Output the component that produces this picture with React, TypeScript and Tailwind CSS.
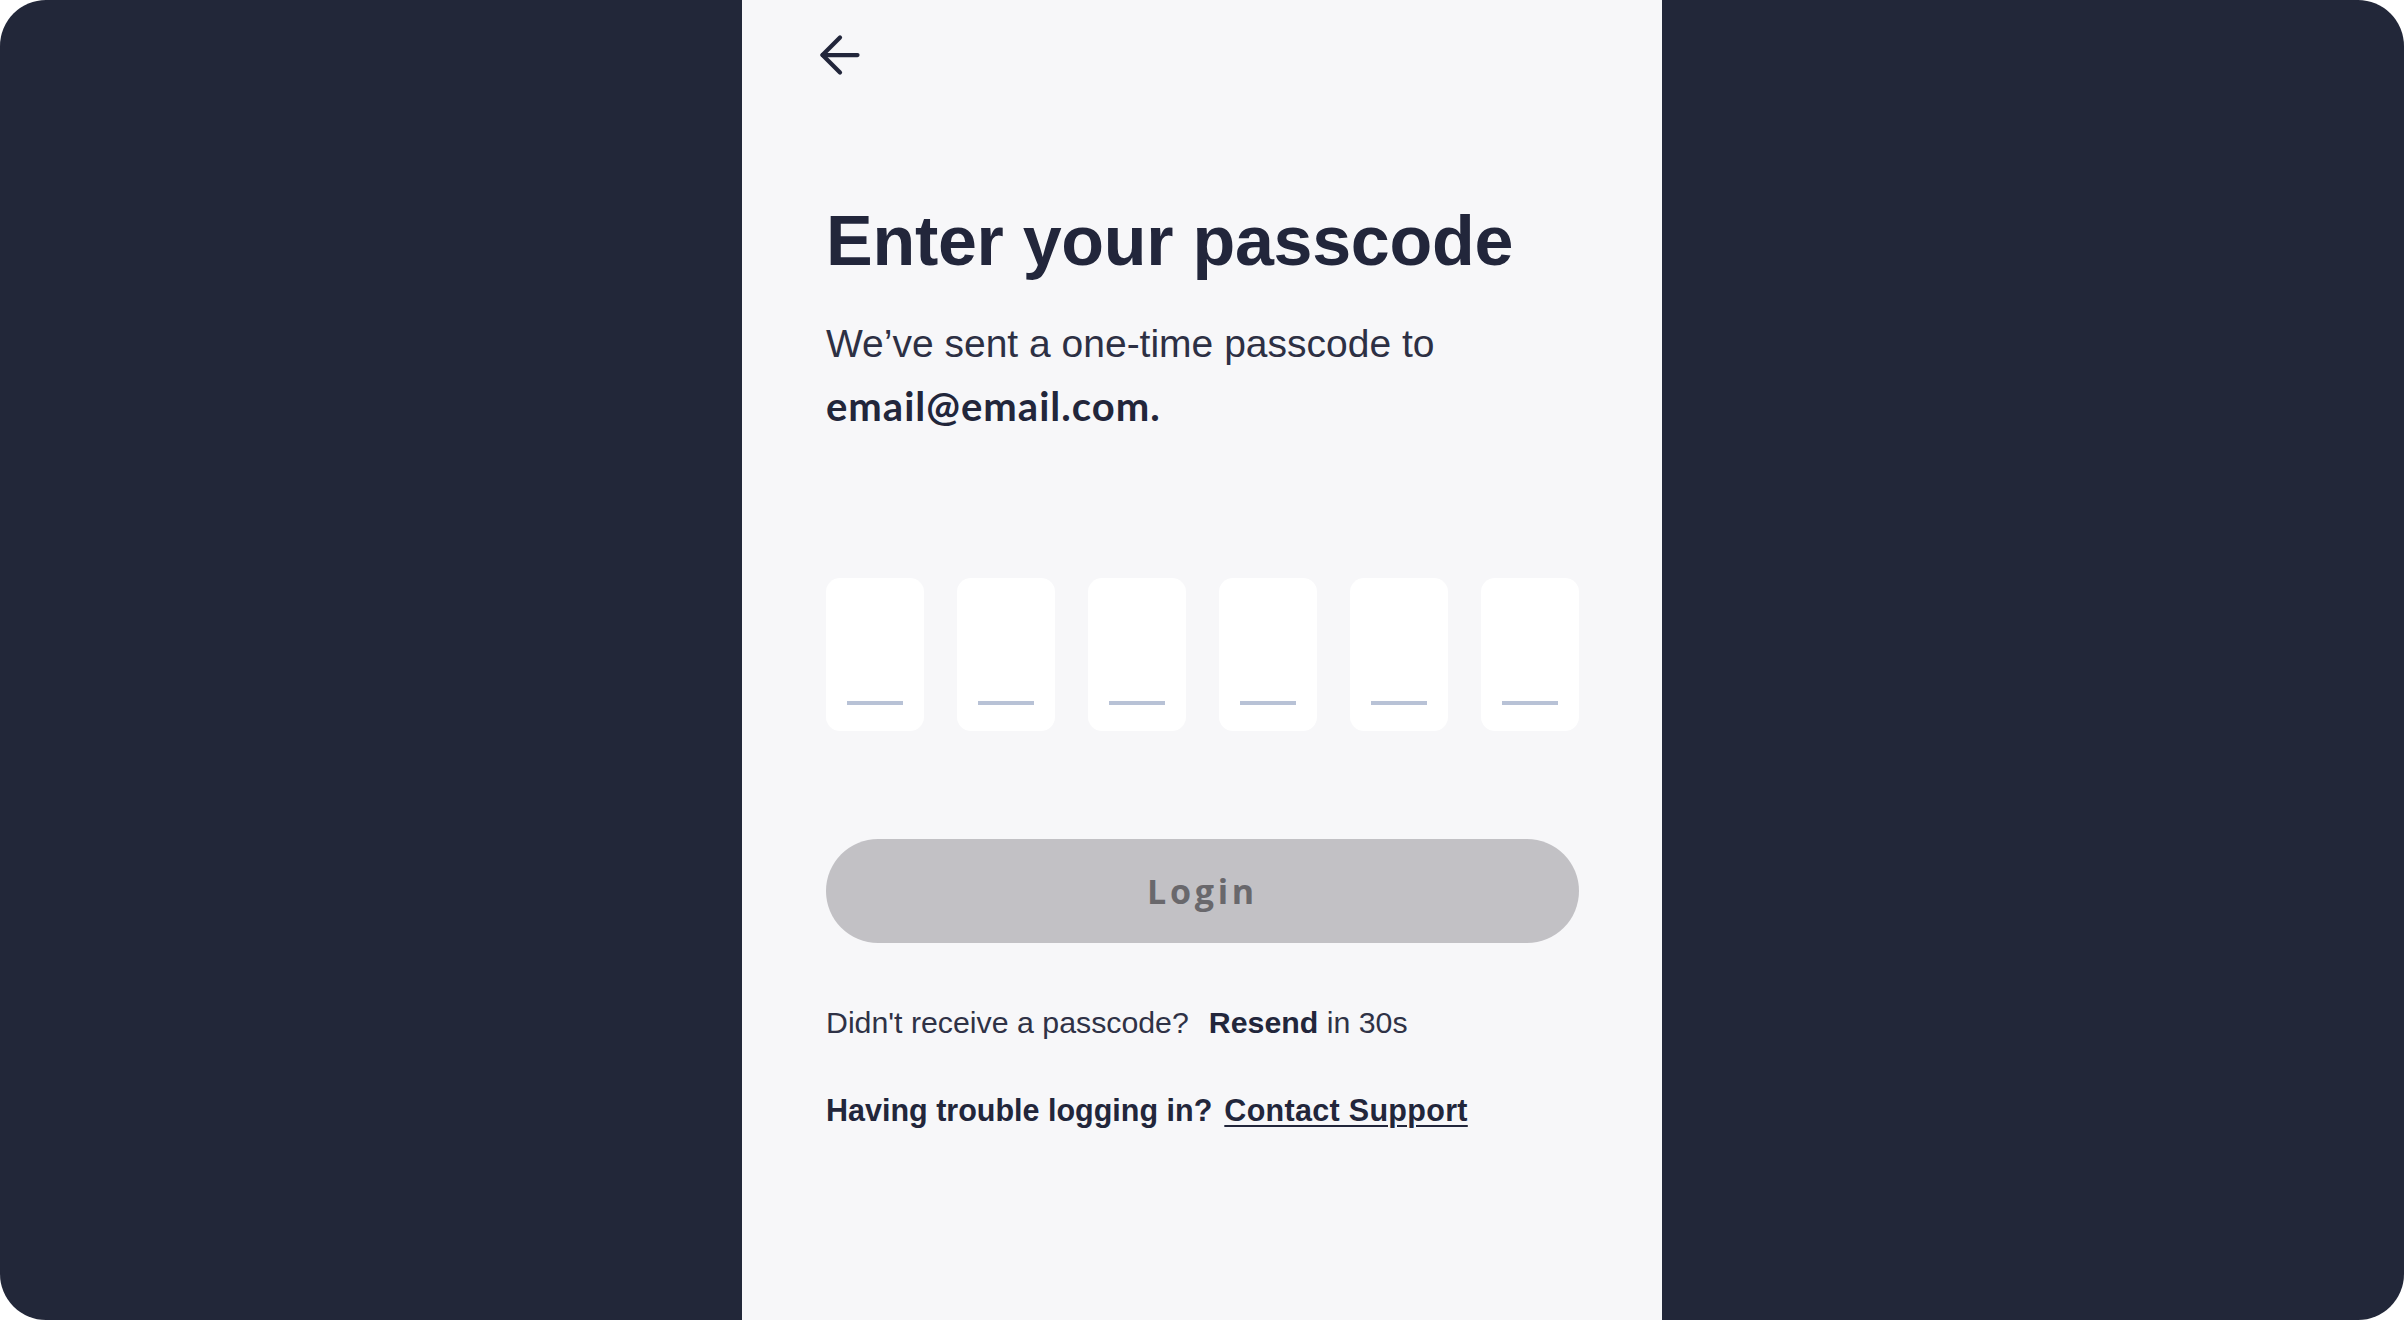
import React from "react";
import { ArrowLeft } from "lucide-react";

export default function App() {
  const boxes = [0, 1, 2, 3, 4, 5];
  return (
    <div className="w-full h-[1320px] bg-white overflow-hidden">
      <div className="w-full h-full rounded-[46px] bg-[#222739] flex justify-center">
        <div
          className="w-[920px] h-full bg-[#f7f7f9] flex flex-col pl-[84px] pr-[83px] text-[#22263b]"
          style={{ fontFamily: '"Liberation Sans", Arial, sans-serif' }}
        >
          <div className="pt-[25px] ml-[-16px] h-[85px]">
            <ArrowLeft size={60} strokeWidth={1.7} color="#22263b" />
          </div>

          <h1 className="mt-[121px] text-[70px] leading-[70px] font-bold tracking-[-0.004em]">
            Enter your passcode
          </h1>

          <p className="mt-[49px] text-[39px] leading-[38px] font-normal text-[#2d3044]">
            We’ve sent a one-time passcode to
          </p>
          <p
            className="mt-[23px] text-[40px] leading-[40px] font-bold tracking-[0.025em] text-[#22263b]"
            style={{ fontFamily: 'Lato, "Noto Sans", sans-serif' }}
          >
            email@email.com.
          </p>

          <div className="mt-[152px] flex gap-[33px]">
            {boxes.map((b) => (
              <div
                key={b}
                className="w-[98px] h-[153px] rounded-[14px] bg-white flex flex-col items-center justify-end pb-[26px]"
              >
                <div className="w-[56px] h-[4px] bg-[#b8c2d6]" />
              </div>
            ))}
          </div>

          <button
            className="mt-[108px] h-[104px] w-full rounded-full bg-[#c2c1c5] flex items-center justify-center text-[34px] font-bold tracking-[0.11em] text-[#69686c]"
            style={{ fontFamily: '"Open Sans", sans-serif' }}
          >
            Login
          </button>

          <p className="mt-[65px] text-[30.3px] leading-[30px] text-[#2f3246] whitespace-nowrap">
            Didn't receive a passcode?
            <span className="ml-[20px] font-bold text-[#22263b]">Resend</span> in 30s
          </p>

          <p className="mt-[57px] text-[30.5px] leading-[30px] font-bold text-[#22263b] whitespace-nowrap">
            Having trouble logging in?
            <a className="ml-[12px] underline decoration-2 underline-offset-[4px] tracking-[0.01em]">Contact Support</a>
          </p>
        </div>
      </div>
    </div>
  );
}
